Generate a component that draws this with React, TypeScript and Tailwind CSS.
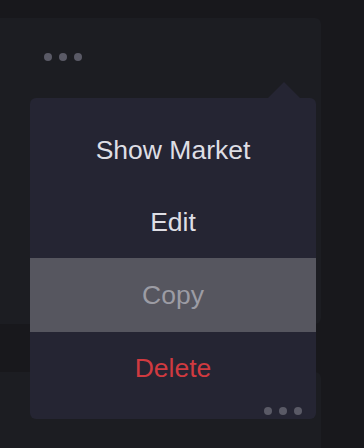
const items = [
  { label: "Show Market", row: "h-[72px] text-[#dedee4]" },
  { label: "Edit", row: "h-[72px] text-[#dedee4]" },
  { label: "Copy", row: "h-[74px] bg-[#56565f] text-[#9c9ca4]" },
  { label: "Delete", row: "h-[72px] text-[#d03a40]" },
];

function Dots({ className }: { className: string }) {
  return (
    <div className={`flex gap-[7px] ${className}`}>
      {[0, 1, 2].map((i) => (
        <span key={i} className="h-2 w-2 rounded-full bg-[#5a5a66]" />
      ))}
    </div>
  );
}

export default function App() {
  return (
    <div
      className="relative h-[448px] w-[364px] overflow-hidden bg-[#18181c]"
      style={{ fontFamily: '"Liberation Sans", Arial, sans-serif' }}
    >
      <div className="pt-[18px]">
        <div className="h-[306px] w-[321px] rounded-tr-md rounded-br-md bg-[#1c1d22] pl-[44px] pt-[35px]">
          <Dots className="" />
        </div>
        <div className="mt-[48px] h-[100px] w-[321px] rounded-tr-md bg-[#1c1d22]" />
      </div>

      <div className="absolute left-[30px] top-[98px] w-[286px] rounded-md bg-[#252533] pt-4">
        <div className="absolute -top-4 right-4 h-0 w-0 border-x-[16px] border-b-[16px] border-x-transparent border-b-[#252533]" />
        {items.map((item) => (
          <div
            key={item.label}
            className={`flex items-center justify-center text-[26.5px] leading-none ${item.row}`}
          >
            {item.label}
          </div>
        ))}
        <Dots className="mb-1 mt-[3px] justify-end pr-[14px]" />
      </div>
    </div>
  );
}
